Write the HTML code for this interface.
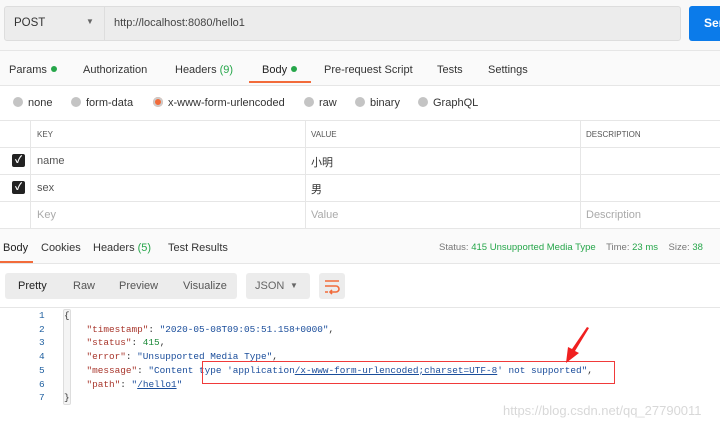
<!DOCTYPE html>
<html><head><meta charset="utf-8"><style>
*{margin:0;padding:0;box-sizing:border-box}
body{width:720px;height:428px;overflow:hidden;background:#fff;font-family:"Liberation Sans","Noto Sans CJK SC",sans-serif;font-size:11px;color:#333;position:relative}
.a{position:absolute;white-space:nowrap}
.g{color:#26a64a}
.dot{display:inline-block;width:6px;height:6px;border-radius:50%;background:#26a64a;margin-left:4px;vertical-align:1px}
.rad{display:inline-block;width:10px;height:10px;border-radius:50%;background:#c4c4c4;vertical-align:-1px;margin-right:5px}
.hl{position:absolute;height:1px;background:#e6e6e6}
.vl{position:absolute;width:1px;background:#e6e6e6}
.cb{position:absolute;width:13px;height:13px;background:#222;border-radius:2px;color:#fff;font-size:10px;line-height:13px;text-align:center;font-weight:bold}
.code{font-family:"Liberation Mono",monospace;font-size:9.4px;color:#1a4d9b}
.k{color:#a8362c}
.n{color:#1d8a3a}
</style></head><body>
<div class="a" style="left:0;top:0;width:720px;height:50px;background:#f8f8f8"></div>
<div class="a" style="left:4px;top:6px;width:677px;height:35px;background:#ececec;border:1px solid #ddd;border-radius:3px"></div>
<div class="vl" style="left:104px;top:7px;height:33px;background:#ddd"></div>
<div class="a" style="left:14px;top:17px;font-size:11.5px;color:#333">POST</div>
<div class="a" style="left:86px;top:17px;font-size:8px;color:#666">▼</div>
<div class="a" style="left:114px;top:17px;font-size:11px;color:#444">http://localhost:8080/hello1</div>
<div class="a" style="left:689px;top:6px;width:40px;height:35px;background:#0b7bea;border-radius:3px;color:#fff;font-weight:bold;font-size:12px;padding:10px 0 0 15px">Send</div>
<div class="hl" style="left:0;top:50px;width:720px"></div>
<div class="a" style="left:0;top:51px;width:720px;height:34px;background:#fafafa"></div>
<div class="a" style="left:9px;top:64px">Params<span class="dot"></span></div>
<div class="a" style="left:83px;top:64px">Authorization</div>
<div class="a" style="left:175px;top:64px">Headers <span class="g">(9)</span></div>
<div class="a" style="left:262px;top:64px;color:#222">Body<span class="dot"></span></div>
<div class="a" style="left:324px;top:64px">Pre-request Script</div>
<div class="a" style="left:437px;top:64px">Tests</div>
<div class="a" style="left:488px;top:64px">Settings</div>
<div class="a" style="left:249px;top:81px;width:62px;height:2px;background:#f26b3a"></div>
<div class="hl" style="left:0;top:85px;width:720px"></div>
<div class="a" style="left:13px;top:97px"><span class="rad"></span>none</div>
<div class="a" style="left:71px;top:97px"><span class="rad"></span>form-data</div>
<div class="a" style="left:153px;top:97px"><span class="rad" style="background:#f26b3a;box-shadow:inset 0 0 0 2px #ccc"></span>x-www-form-urlencoded</div>
<div class="a" style="left:304px;top:97px"><span class="rad"></span>raw</div>
<div class="a" style="left:355px;top:97px"><span class="rad"></span>binary</div>
<div class="a" style="left:418px;top:97px"><span class="rad"></span>GraphQL</div>
<div class="hl" style="left:0;top:120px;width:720px"></div>
<div class="hl" style="left:0;top:147px;width:720px"></div>
<div class="hl" style="left:0;top:174px;width:720px"></div>
<div class="hl" style="left:0;top:201px;width:720px"></div>
<div class="hl" style="left:0;top:228px;width:720px"></div>
<div class="vl" style="left:30px;top:120px;height:108px"></div>
<div class="vl" style="left:305px;top:120px;height:108px"></div>
<div class="vl" style="left:580px;top:120px;height:108px"></div>
<div class="a" style="left:37px;top:130px;font-size:8px;color:#555">KEY</div>
<div class="a" style="left:311px;top:130px;font-size:8px;color:#555">VALUE</div>
<div class="a" style="left:586px;top:130px;font-size:8px;color:#555">DESCRIPTION</div>
<div class="cb" style="left:12px;top:154px">✓</div>
<div class="cb" style="left:12px;top:181px">✓</div>
<div class="a" style="left:37px;top:155px;color:#555">name</div>
<div class="a" style="left:311px;top:154px">小明</div>
<div class="a" style="left:37px;top:182px;color:#555">sex</div>
<div class="a" style="left:311px;top:181px">男</div>
<div class="a" style="left:37px;top:209px;color:#aaa">Key</div>
<div class="a" style="left:311px;top:209px;color:#aaa">Value</div>
<div class="a" style="left:586px;top:209px;color:#aaa">Description</div>
<div class="a" style="left:0;top:229px;width:720px;height:34px;background:#fafafa"></div>
<div class="a" style="left:3px;top:242px;color:#222">Body</div>
<div class="a" style="left:41px;top:242px">Cookies</div>
<div class="a" style="left:93px;top:242px">Headers <span class="g">(5)</span></div>
<div class="a" style="left:168px;top:242px">Test Results</div>
<div class="a" style="left:0;top:261px;width:33px;height:2px;background:#f26b3a"></div>
<div class="hl" style="left:0;top:263px;width:720px"></div>
<div class="a" style="left:439px;top:242px;font-size:9.5px;color:#777">Status: <span class="g">415 Unsupported Media Type</span>&nbsp;&nbsp;&nbsp; Time: <span class="g">23 ms</span>&nbsp;&nbsp;&nbsp; Size: <span class="g">38</span></div>
<div class="a" style="left:5px;top:273px;width:232px;height:26px;background:#ececec;border-radius:3px"></div>
<div class="a" style="left:18px;top:280px;color:#222">Pretty</div>
<div class="a" style="left:73px;top:280px;color:#555">Raw</div>
<div class="a" style="left:119px;top:280px;color:#555">Preview</div>
<div class="a" style="left:183px;top:280px;color:#555">Visualize</div>
<div class="a" style="left:246px;top:273px;width:64px;height:26px;background:#ececec;border-radius:3px"></div>
<div class="a" style="left:255px;top:280px;color:#666">JSON</div>
<div class="a" style="left:290px;top:281px;font-size:8px;color:#666">▼</div>
<div class="a" style="left:319px;top:273px;width:26px;height:26px;background:#ececec;border-radius:3px"></div>
<svg class="a" style="left:319px;top:273px" width="26" height="26"><g stroke="#f26b3a" stroke-width="1.6" fill="none"><path d="M6 8h14M6 13h11a3 3 0 0 1 0 6h-6M13 17l-2 2 2 2M6 19h3"/></g></svg>
<div class="hl" style="left:0;top:307px;width:720px"></div>
<div class="a" style="left:63px;top:309px;width:8px;height:96px;border:1px solid #ddd;border-radius:2px;background:#f4f4f4"></div>
<div class="a code" style="left:39px;top:309px;color:#2060a0;line-height:13.7px;text-align:right">1<br>2<br>3<br>4<br>5<br>6<br>7</div>
<div class="a code" style="left:64px;top:309px;line-height:13.7px;color:#333">{<br>&nbsp;&nbsp;&nbsp;&nbsp;<span class="k">"timestamp"</span>: <span style="color:#1a4d9b">"2020-05-08T09:05:51.158+0000"</span>,<br>&nbsp;&nbsp;&nbsp;&nbsp;<span class="k">"status"</span>: <span class="n">415</span>,<br>&nbsp;&nbsp;&nbsp;&nbsp;<span class="k">"error"</span>: <span style="color:#1a4d9b">"Unsupported Media Type"</span>,<br>&nbsp;&nbsp;&nbsp;&nbsp;<span class="k">"message"</span>: <span style="color:#1a4d9b">"Content type 'application<u>/x-www-form-urlencoded;charset=UTF-8</u>' not supported"</span>,<br>&nbsp;&nbsp;&nbsp;&nbsp;<span class="k">"path"</span>: <span style="color:#1a4d9b">"<u>/hello1</u>"</span><br>}</div>
<div class="a" style="left:202px;top:361px;width:413px;height:23px;border:1.5px solid #f03a3a"></div>
<svg class="a" style="left:555px;top:325px" width="40" height="45"><path d="M34 3 L20 26 L24 28 L11 38 L13 22 L17 24 L32 2Z" fill="#f02020"/></svg>
<div class="a" style="left:503px;top:403px;font-size:13px;color:#d8d8d8">https://blog.csdn.net/qq_27790011</div>
</body></html>
